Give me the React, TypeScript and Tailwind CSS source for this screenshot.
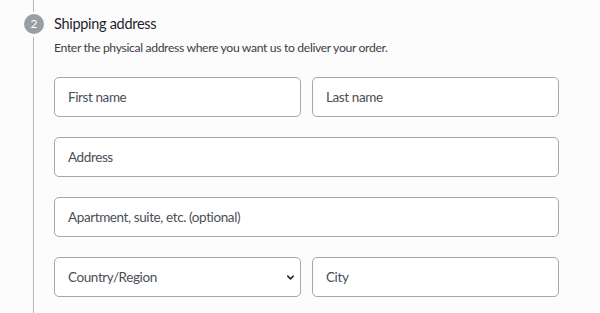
import { ChevronDown } from "lucide-react"

function Field({ label, select }: { label: string; select?: boolean }) {
  return (
    <div className="flex h-[40px] min-w-0 shrink-0 items-center rounded-[5px] border border-[#a3a7ae] bg-white pl-[13px] pr-[4px] text-[13.5px] tracking-[-0.4px] text-[#4a4f57]">
      <span className="flex-1">{label}</span>
      {select && <ChevronDown className="h-[11px] w-[11px] text-[#222]" strokeWidth={3.2} />}
    </div>
  )
}

export default function App() {
  return (
    <div
      className="relative h-[313px] w-[600px] overflow-hidden bg-[#fcfcfd]"
      style={{ fontFamily: "Lato, 'Noto Sans', sans-serif" }}
    >
      {/* timeline rail */}
      <div className="absolute left-[33px] top-0 h-[12px] w-px bg-[#b4b7bc]" />
      <div className="absolute left-[33px] top-[37px] bottom-0 w-px bg-[#b4b7bc]" />
      <div className="absolute left-[24px] top-[14px] flex h-[20px] w-[20px] items-center justify-center rounded-full bg-[#9a9da2] text-[12px] text-white">
        2
      </div>

      <div className="pl-[54px] pr-[41px] pt-[13px]">
        <h2 className="text-[14.5px] leading-[22px] tracking-[-0.3px] text-[#1f2329]">Shipping address</h2>
        <p className="mt-[3px] text-[12.2px] leading-[20px] tracking-[-0.35px] text-[#3c4046]">
          Enter the physical address where you want us to deliver your order.
        </p>

        <div className="mt-[19px] flex flex-col gap-[20px]">
          <div className="grid grid-cols-2 gap-[11px]">
            <Field label="First name" />
            <Field label="Last name" />
          </div>
          <Field label="Address" />
          <Field label="Apartment, suite, etc. (optional)" />
          <div className="grid grid-cols-2 gap-[11px]">
            <Field label="Country/Region" select />
            <Field label="City" />
          </div>
        </div>
      </div>
    </div>
  )
}
